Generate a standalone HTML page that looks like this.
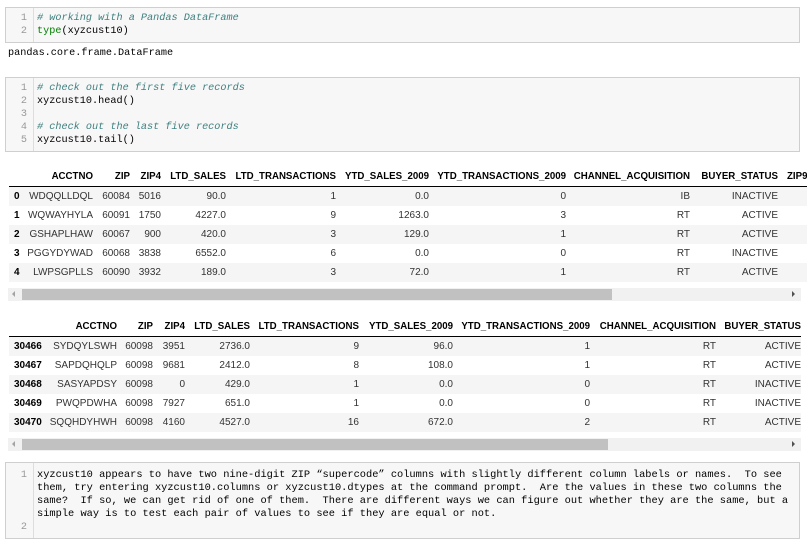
<!DOCTYPE html>
<html><head><meta charset="utf-8"><style>
body{margin:0;width:807px;height:546px;background:#fff;position:relative;overflow:hidden;font-family:"Liberation Sans",Arial,sans-serif}
.cell{position:absolute;left:5px;width:795px;background:#f7f7f7;border:1px solid #cfcfcf;box-sizing:border-box}
.gut{position:absolute;left:0;top:0;bottom:0;width:27px;border-right:1px solid #ddd;background:#f7f7f7}
.ln{position:absolute;width:21px;text-align:right;color:#999;font:10.2px/13px "Liberation Mono",monospace}
.code{position:absolute;left:31px;font:10.2px/13px "Liberation Mono",monospace;color:#000;white-space:pre}
.cm{color:#408080;font-style:italic}
.bi{color:#008000}
.out{position:absolute;left:8px;font:10.2px/13px "Liberation Mono",monospace;color:#000}
table{position:absolute;left:9px;border-collapse:collapse;table-layout:fixed;font-size:10px;color:#333}
td,th{height:19px;padding:0;text-align:right;white-space:nowrap;overflow:visible}
th{color:#000;font-weight:bold;font-size:9.7px}
thead th{border-bottom:1px solid #000;height:20px}
tbody tr:nth-child(odd){background:#f5f5f5}
tbody th{text-align:left;padding-left:5px;font-size:10px}
.sb{position:absolute;left:8px;width:793px;height:13px;background:#f1f1f1}
.th{position:absolute;top:1px;height:11px;background:#c1c1c1}
.al{position:absolute;top:3px;width:0;height:0;border-top:3.5px solid transparent;border-bottom:3.5px solid transparent}
</style></head><body>

<div class="cell" style="top:7px;height:36px">
<div class="gut"></div>
<div class="ln" style="top:4px">1<br>2</div>
<div class="code" style="top:4px"><span class="cm"># working with a Pandas DataFrame</span>
<span class="bi">type</span>(xyzcust10)</div>
</div>
<div class="out" style="top:47px">pandas.core.frame.DataFrame</div>

<div class="cell" style="top:77px;height:75px">
<div class="gut"></div>
<div class="ln" style="top:4px">1<br>2<br>3<br>4<br>5</div>
<div class="code" style="top:4px"><span class="cm"># check out the first five records</span>
xyzcust10.head()

<span class="cm"># check out the last five records</span>
xyzcust10.tail()</div>
</div>

<div style="position:absolute;left:0;top:160px;width:807px;height:128px;overflow:hidden">
<table style="top:6px;width:800px">
<colgroup><col style="width:15px"><col style="width:69px"><col style="width:37px"><col style="width:31px"><col style="width:65px"><col style="width:110px"><col style="width:93px"><col style="width:137px"><col style="width:124px"><col style="width:88px"><col style="width:31px"></colgroup>
<thead><tr><th></th><th>ACCTNO</th><th>ZIP</th><th>ZIP4</th><th>LTD_SALES</th><th>LTD_TRANSACTIONS</th><th>YTD_SALES_2009</th><th>YTD_TRANSACTIONS_2009</th><th>CHANNEL_ACQUISITION</th><th>BUYER_STATUS</th><th style="text-align:left;padding-left:9px">ZIP9_SUPERCODE</th></tr></thead>
<tbody>
<tr><th>0</th><td>WDQQLLDQL</td><td>60084</td><td>5016</td><td>90.0</td><td>1</td><td>0.0</td><td>0</td><td>IB</td><td>INACTIVE</td><td></td></tr>
<tr><th>1</th><td>WQWAYHYLA</td><td>60091</td><td>1750</td><td>4227.0</td><td>9</td><td>1263.0</td><td>3</td><td>RT</td><td>ACTIVE</td><td></td></tr>
<tr><th>2</th><td>GSHAPLHAW</td><td>60067</td><td>900</td><td>420.0</td><td>3</td><td>129.0</td><td>1</td><td>RT</td><td>ACTIVE</td><td></td></tr>
<tr><th>3</th><td>PGGYDYWAD</td><td>60068</td><td>3838</td><td>6552.0</td><td>6</td><td>0.0</td><td>0</td><td>RT</td><td>INACTIVE</td><td></td></tr>
<tr><th>4</th><td>LWPSGPLLS</td><td>60090</td><td>3932</td><td>189.0</td><td>3</td><td>72.0</td><td>1</td><td>RT</td><td>ACTIVE</td><td></td></tr>
</tbody></table>
</div>
<div class="sb" style="top:288px"><div class="th" style="left:14px;width:590px"></div>
<div class="al" style="left:4px;border-right:3.5px solid #a3a3a3"></div>
<div class="al" style="left:784px;border-left:3.5px solid #505050"></div></div>

<table style="top:316px;width:792px">
<colgroup><col style="width:36px"><col style="width:72px"><col style="width:36px"><col style="width:32px"><col style="width:65px"><col style="width:109px"><col style="width:94px"><col style="width:137px"><col style="width:126px"><col style="width:85px"></colgroup>
<thead><tr><th></th><th>ACCTNO</th><th>ZIP</th><th>ZIP4</th><th>LTD_SALES</th><th>LTD_TRANSACTIONS</th><th>YTD_SALES_2009</th><th>YTD_TRANSACTIONS_2009</th><th>CHANNEL_ACQUISITION</th><th>BUYER_STATUS</th></tr></thead>
<tbody>
<tr><th>30466</th><td>SYDQYLSWH</td><td>60098</td><td>3951</td><td>2736.0</td><td>9</td><td>96.0</td><td>1</td><td>RT</td><td>ACTIVE</td></tr>
<tr><th>30467</th><td>SAPDQHQLP</td><td>60098</td><td>9681</td><td>2412.0</td><td>8</td><td>108.0</td><td>1</td><td>RT</td><td>ACTIVE</td></tr>
<tr><th>30468</th><td>SASYAPDSY</td><td>60098</td><td>0</td><td>429.0</td><td>1</td><td>0.0</td><td>0</td><td>RT</td><td>INACTIVE</td></tr>
<tr><th>30469</th><td>PWQPDWHA</td><td>60098</td><td>7927</td><td>651.0</td><td>1</td><td>0.0</td><td>0</td><td>RT</td><td>INACTIVE</td></tr>
<tr><th>30470</th><td>SQQHDYHWH</td><td>60098</td><td>4160</td><td>4527.0</td><td>16</td><td>672.0</td><td>2</td><td>RT</td><td>ACTIVE</td></tr>
</tbody></table>
<div class="sb" style="top:438px"><div class="th" style="left:14px;width:586px"></div>
<div class="al" style="left:4px;border-right:3.5px solid #a3a3a3"></div>
<div class="al" style="left:784px;border-left:3.5px solid #505050"></div></div>

<div class="cell" style="top:462px;height:77px">
<div class="gut"></div>
<div class="ln" style="top:6px">1<br><br><br><br>2</div>
<div class="code" style="top:6px;font-size:10.35px">xyzcust10 appears to have two nine-digit ZIP “supercode” columns with slightly different column labels or names.  To see
them, try entering xyzcust10.columns or xyzcust10.dtypes at the command prompt.  Are the values in these two columns the
same?  If so, we can get rid of one of them.  There are different ways we can figure out whether they are the same, but a
simple way is to test each pair of values to see if they are equal or not.</div>
</div>
</body></html>
